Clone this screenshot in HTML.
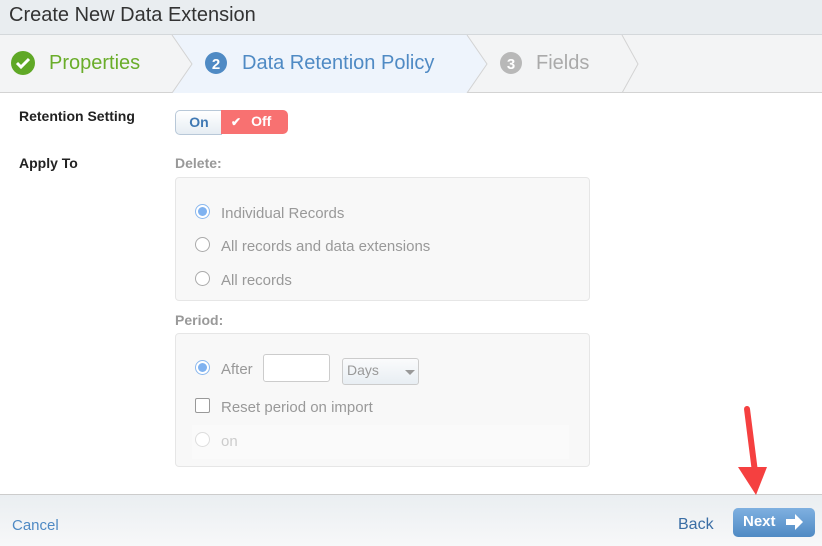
<!DOCTYPE html>
<html><head><style>
body{margin:0;width:822px;height:545px;position:relative;overflow:hidden;font-family:"Liberation Sans",sans-serif;background:#fff}
.a{position:absolute}
.lbl{font-size:14px;font-weight:bold;color:#222}
.gl{font-size:14px;font-weight:bold;color:#999}
.t{font-size:15px;color:#999}
.rad{width:13px;height:13px;border:1px solid #aaa;border-radius:50%;background:#fff}
</style></head><body>
<div class="a" style="left:0;top:0;width:822px;height:34px;background:#e9edf0;border-bottom:1px solid #d4d8db"></div>
<div class="a" style="left:9px;top:4px;font-size:20px;color:#333">Create New Data Extension</div>
<div class="a" style="left:0;top:35px;width:822px;height:57px;background:#f3f4f5;border-bottom:1px solid #d3d3d3"></div>
<svg class="a" style="left:0;top:35px" width="822" height="58">
<polygon points="172,0 467,0 487,29 467,58 172,58 192,29" fill="#eef4fc"/>
<polyline points="172,0 192,29 172,58" fill="none" stroke="#d3d3d3"/>
<polyline points="467,0 487,29 467,58" fill="none" stroke="#d3d3d3"/>
<polyline points="622,0 638,29 622,58" fill="none" stroke="#d3d3d3"/>
<circle cx="23" cy="28" r="12" fill="#5fa826"/>
<path d="M17 28 l4 4 l8 -8" stroke="#fff" stroke-width="3" fill="none"/>
<circle cx="216" cy="28" r="11" fill="#4f8ac4"/>
<text x="216" y="34" fill="#fff" font-size="15" font-weight="bold" text-anchor="middle" font-family="Liberation Sans">2</text>
<circle cx="511" cy="28" r="11" fill="#b8b8b8"/>
<text x="511" y="34" fill="#fff" font-size="15" font-weight="bold" text-anchor="middle" font-family="Liberation Sans">3</text>
</svg>
<div class="a" style="left:49px;top:52px;font-size:20px;color:#6aad2a">Properties</div>
<div class="a" style="left:242px;top:52px;font-size:20px;color:#4f8ac4">Data Retention Policy</div>
<div class="a" style="left:536px;top:52px;font-size:20px;color:#aaa">Fields</div>
<div class="a lbl" style="left:19px;top:108px">Retention Setting</div>
<div class="a lbl" style="left:19px;top:155px">Apply To</div>
<div class="a" style="left:175px;top:110px;width:46px;height:23px;border:1px solid #b8c8d8;border-right:none;border-radius:5px 0 0 5px;background:linear-gradient(#fff,#e6edf3);color:#3f78b3;font-weight:bold;font-size:14px;text-align:center;line-height:22px">On</div>
<div class="a" style="left:221px;top:110px;width:67px;height:24px;background:#f87171;border-radius:0 5px 5px 0;color:#fff;font-weight:bold;font-size:14px;line-height:22px"><span style="margin-left:10px;font-size:12px">✔</span><span style="margin-left:10px">Off</span></div>
<div class="a gl" style="left:175px;top:155px">Delete:</div>
<div class="a" style="left:175px;top:177px;width:413px;height:122px;border:1px solid #e6e6e6;border-radius:4px;background:#f8f8f8"></div>
<div class="a rad" style="left:195px;top:204px;border-color:#8bb8ee"><div style="margin:2px;width:9px;height:9px;border-radius:50%;background:#7fb2f0"></div></div>
<div class="a t" style="left:221px;top:205px">Individual Records</div>
<div class="a rad" style="left:195px;top:237px"></div>
<div class="a t" style="left:221px;top:238px">All records and data extensions</div>
<div class="a rad" style="left:195px;top:271px"></div>
<div class="a t" style="left:221px;top:272px">All records</div>
<div class="a gl" style="left:175px;top:312px">Period:</div>
<div class="a" style="left:175px;top:333px;width:413px;height:132px;border:1px solid #e6e6e6;border-radius:4px;background:#f8f8f8"></div>
<div class="a rad" style="left:195px;top:360px;border-color:#8bb8ee"><div style="margin:2px;width:9px;height:9px;border-radius:50%;background:#7fb2f0"></div></div>
<div class="a t" style="left:221px;top:361px">After</div>
<div class="a" style="left:263px;top:354px;width:65px;height:26px;border:1px solid #ccc;border-radius:3px;background:#fff"></div>
<div class="a" style="left:342px;top:358px;width:75px;height:25px;border:1px solid #ccc;border-radius:3px;background:linear-gradient(#fafbfc,#e8eef3);color:#999;font-size:14px;line-height:22px;text-indent:4px">Days</div>
<div class="a" style="left:405px;top:370px;border:5px solid transparent;border-top-color:#999;border-bottom:none"></div>
<div class="a" style="left:195px;top:398px;width:13px;height:13px;border:1px solid #999;border-radius:2px;background:#fff"></div>
<div class="a t" style="left:221px;top:399px">Reset period on import</div>
<div class="a" style="left:192px;top:425px;width:377px;height:34px;background:#fafafa"></div>
<div class="a rad" style="left:195px;top:432px;border-color:#ddd"></div>
<div class="a t" style="left:221px;top:433px;color:#ccc">on</div>
<div class="a" style="left:0;top:494px;width:822px;height:51px;border-top:1px solid #ccc;background:linear-gradient(#eaeef1,#f7f8f9)"></div>
<div class="a" style="left:12px;top:517px;font-size:15px;color:#4f8ac4">Cancel</div>
<div class="a" style="left:678px;top:516px;font-size:16px;color:#3a6ea5">Back</div>
<div class="a" style="left:733px;top:508px;width:82px;height:29px;border-radius:5px;background:linear-gradient(#7fb0e0,#4f8ac4);color:#fff;font-weight:bold;font-size:15px;line-height:28px"><span style="margin-left:10px">Next</span></div>
<svg class="a" style="left:785px;top:513px" width="20" height="18"><path d="M1 6h9V1l8 8-8 8v-5H1z" fill="#fff"/></svg>
<svg class="a" style="left:730px;top:400px" width="50" height="100">
<line x1="17" y1="9" x2="25" y2="72" stroke="#f54040" stroke-width="6" stroke-linecap="round"/>
<polygon points="8,67 37,67 26,95" fill="#f54040"/>
</svg>
</body></html>
